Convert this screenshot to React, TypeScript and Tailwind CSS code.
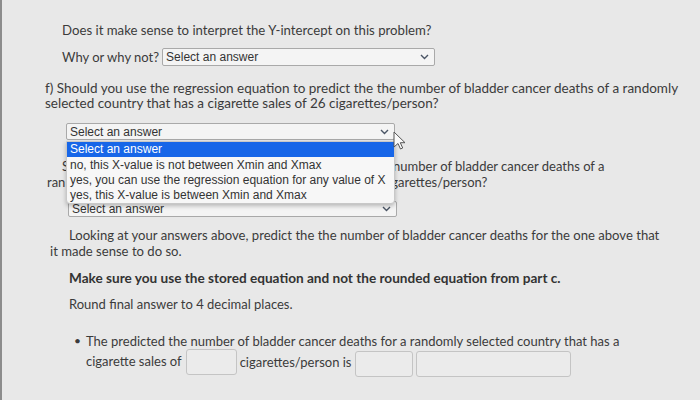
import React from 'react';

const Chevron = () => (
  <svg width="9" height="6" viewBox="0 0 9 6" className="text-gray-600">
    <path d="M1 1l3.5 3.5L8 1" fill="none" stroke="currentColor" strokeWidth="1.4" />
  </svg>
);

const Select = ({ className }: { className: string }) => (
  <div
    className={`flex items-center justify-between border border-[#a9a9a9] bg-[#f4f4f4] rounded-[2px] pl-[3px] pr-[5px] text-[12px] text-[#333] font-['Liberation_Sans',Arial,sans-serif] ${className}`}
  >
    <span>Select an answer</span>
    <Chevron />
  </div>
);

const options = [
  'no, this X-value is not between Xmin and Xmax',
  'yes, you can use the regression equation for any value of X',
  'yes, this X-value is between Xmin and Xmax',
];

export default function App() {
  return (
    <div className="relative h-[400px] w-[700px] overflow-hidden border-l-2 border-[#8c8c8c] bg-[#e8e8e8] text-[#3b3b3b] font-['Lato',sans-serif]">
      <div className="pt-[21px] pl-[60px] text-[13.2px] leading-[18px] whitespace-nowrap">
        Does it make sense to interpret the Y-intercept on this problem?
      </div>
      <div className="mt-[9px] flex items-center pl-[60px] text-[13px] leading-[18px]">
        <span>Why or why not?</span>
        <Select className="ml-[3px] h-[18px] w-[273px]" />
      </div>

      <div className="mt-[15px] pl-[43px] text-[13.5px] leading-[15px] whitespace-nowrap">
        f) Should you use the regression equation to predict the the number of bladder cancer deaths of a randomly
        <br />
        selected country that has a cigarette sales of 26 cigarettes/person?
      </div>

      <div className="mt-[12px] pl-[64px]">
        <Select className="h-[17px] w-[329px]" />
      </div>
      <div className="mt-[18px] text-[13px] leading-[16px] whitespace-nowrap">
        <div className="pl-[60px]">
          S<span className="pl-[324px]">number of bladder cancer deaths of a</span>
        </div>
        <div className="pl-[45px]">
          ran<span className="pl-[326px]">garettes/person?</span>
        </div>
      </div>
      <div className="mt-[11px] pl-[66px]">
        <Select className="h-[16px] w-[329px]" />
      </div>

      <div className="mt-[10px] pl-[48px] text-[13.1px] leading-[16px] whitespace-nowrap">
        <span className="pl-[19px]">
          Looking at your answers above, predict the the number of bladder cancer deaths for the one above that
        </span>
        <br />
        it made sense to do so.
      </div>
      <div className="mt-[11px] pl-[67px] text-[13.6px] font-bold leading-[16px] text-[#333] whitespace-nowrap">
        Make sure you use the stored equation and not the rounded equation from part c.
      </div>
      <div className="mt-[10px] pl-[67px] text-[13px] leading-[16px]">Round final answer to 4 decimal places.</div>

      <div className="mt-[21px] flex pl-[72px] text-[13px] leading-[16px]">
        <span className="w-[12px] text-[12px]">•</span>
        <div>
          <div className="whitespace-nowrap">
            The predicted the number of bladder cancer deaths for a randomly selected country that has a
          </div>
          <div className="flex items-start">
            <span className="pt-[4px]">cigarette sales of</span>
            <span className="ml-[4px] h-[26px] w-[51px] rounded-[3px] border border-[#c4c4c4] bg-[#ebebeb]" />
            <span className="ml-[3px] pt-[5px]">cigarettes/person is</span>
            <span className="ml-[3px] mt-[2px] h-[26px] w-[58px] rounded-[3px] border border-[#c4c4c4] bg-[#ebebeb]" />
            <span className="ml-[3px] mt-[2px] h-[26px] w-[155px] rounded-[3px] border border-[#c4c4c4] bg-[#ebebeb]" />
          </div>
        </div>
      </div>

      {/* open dropdown menu */}
      <div className="absolute left-[64px] top-[141px] w-[329px] rounded-b-[4px] border border-[#c8c8c8] bg-[#f7f7f7] text-[12px] leading-[15px] text-[#333] shadow-[0_2px_4px_rgba(0,0,0,0.25)] font-['Liberation_Sans',Arial,sans-serif]">
        <div className="bg-[#1766e8] px-[3px] text-white">Select an answer</div>
        <div className="pt-[1px]">
          {options.map((o) => (
            <div key={o} className="px-[3px]">
              {o}
            </div>
          ))}
        </div>
      </div>

      {/* mouse cursor */}
      <svg className="absolute left-[391px] top-[131px]" width="14" height="20" viewBox="0 0 14 20">
        <path d="M1 1v15l4-3.5 2.5 5.5 2.2-1-2.4-5.3H12z" fill="#fafafa" stroke="#555" strokeWidth="1" />
      </svg>
    </div>
  );
}
